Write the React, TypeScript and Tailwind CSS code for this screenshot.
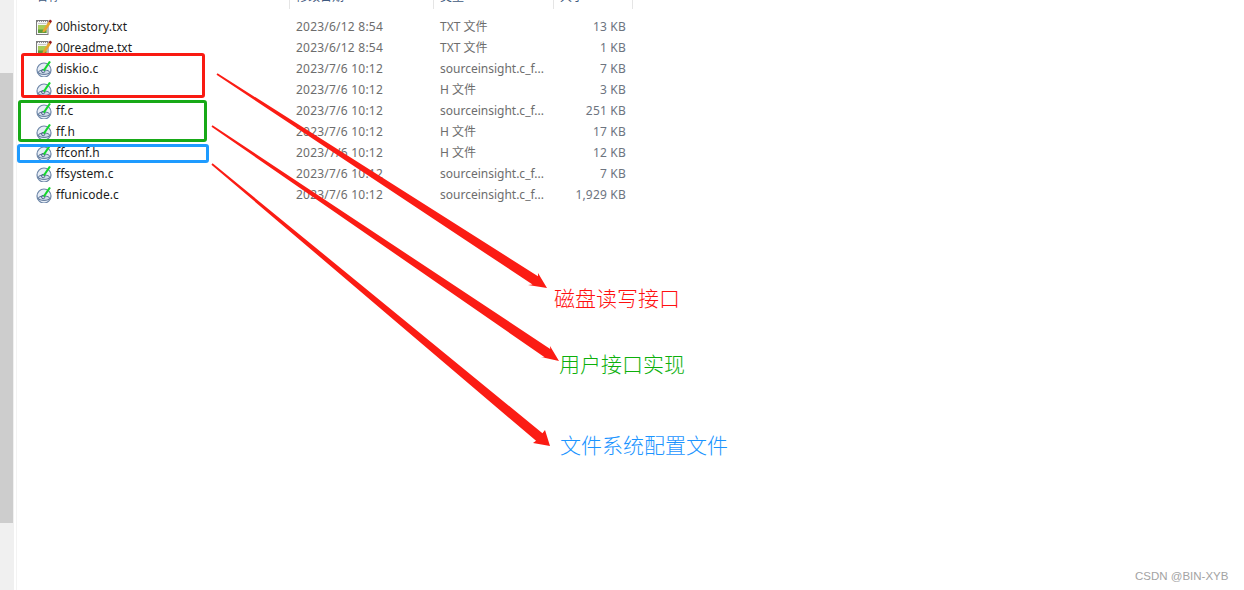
const FONT = "font-['Noto_Sans','Noto_Sans_CJK_SC',sans-serif]";

const files = [
  { name: "00history.txt", date: "2023/6/12 8:54", type: "TXT 文件", size: "13 KB", kind: "txt" },
  { name: "00readme.txt", date: "2023/6/12 8:54", type: "TXT 文件", size: "1 KB", kind: "txt" },
  { name: "diskio.c", date: "2023/7/6 10:12", type: "sourceinsight.c_f...", size: "7 KB", kind: "si" },
  { name: "diskio.h", date: "2023/7/6 10:12", type: "H 文件", size: "3 KB", kind: "si" },
  { name: "ff.c", date: "2023/7/6 10:12", type: "sourceinsight.c_f...", size: "251 KB", kind: "si" },
  { name: "ff.h", date: "2023/7/6 10:12", type: "H 文件", size: "17 KB", kind: "si" },
  { name: "ffconf.h", date: "2023/7/6 10:12", type: "H 文件", size: "12 KB", kind: "si" },
  { name: "ffsystem.c", date: "2023/7/6 10:12", type: "sourceinsight.c_f...", size: "7 KB", kind: "si" },
  { name: "ffunicode.c", date: "2023/7/6 10:12", type: "sourceinsight.c_f...", size: "1,929 KB", kind: "si" },
];

function TxtIcon() {
  return (
    <svg width="16" height="16" viewBox="0 0 16 16" className="shrink-0">
      <rect x="0.5" y="1.5" width="11.5" height="14" fill="#f6f6f6" stroke="#7a7a7a" />
      <path d="M1 2.5h11" stroke="#8f8f8f" strokeDasharray="1 1" />
      <path d="M2 4.5h8.5" stroke="#c9c9c9" />
      <rect x="2" y="6" width="8.5" height="8" fill="#a6cc5c" />
      <rect x="2" y="10.5" width="8.5" height="3.5" fill="#5f9c3c" />
      <path d="M7 11 L12.6 2.6 L14.8 4.2 L9.2 12.4 L6.4 13.4 Z" fill="#e9a52f" />
      <path d="M12.6 2.6 L14 0.6 L16 2 L14.8 4.2 Z" fill="#98161a" />
    </svg>
  );
}

function SiIcon() {
  return (
    <svg width="16" height="16" viewBox="0 0 16 16" className="shrink-0">
      <circle cx="8" cy="9" r="7" fill="#e6edf6" stroke="#6d86a8" strokeWidth="1.2" />
      <ellipse cx="8" cy="11.2" rx="5.6" ry="2.2" fill="#cfdbe9" stroke="#5d7596" strokeWidth="1" />
      <circle cx="7.2" cy="10" r="1.7" fill="none" stroke="#4a6387" strokeWidth="0.9" />
      <path d="M7.8 9.5 L14 0.5" stroke="#14d62c" strokeWidth="2.1" />
    </svg>
  );
}

function Row({ f }: { f: (typeof files)[number] }) {
  return (
    <div className="flex h-[21px] items-center text-[12px]">
      <div className="flex w-[272px] items-center gap-[4px] pl-[19px] text-[#1c1c1c]">
        {f.kind === "txt" ? <TxtIcon /> : <SiIcon />}
        <span className="tracking-[0.05px]">{f.name}</span>
      </div>
      <div className="w-[144px] pl-[7px] tracking-[0.22px] text-[#6d6d6d]">{f.date}</div>
      <div className="w-[120px] pl-[7px] whitespace-nowrap text-[#6d6d6d]">{f.type}</div>
      <div className="w-[73px] text-right tracking-[0.2px] text-[#6d7480]">{f.size}</div>
    </div>
  );
}

function Arrow({ x1, y1, x2, y2, b1, b2, color = "#fb1c14" }: { x1: number; y1: number; x2: number; y2: number; b1: number[]; b2: number[]; color?: string }) {
  const dx = x2 - x1;
  const dy = y2 - y1;
  const len = Math.hypot(dx, dy);
  const ux = dx / len;
  const uy = dy / len;
  const nx = -uy;
  const ny = ux;
  const back = len - 14;
  const bx = x1 + ux * back;
  const by = y1 + uy * back;
  const w = 5;
  const t = 0.9;
  const pts = [
    [x1 - nx * t, y1 - ny * t],
    [bx - nx * w, by - ny * w],
    b1,
    [x2, y2],
    b2,
    [bx + nx * w, by + ny * w],
    [x1 + nx * t, y1 + ny * t],
  ];
  return <polygon points={pts.map((p) => p.join(",")).join(" ")} fill={color} />;
}

export default function App() {
  return (
    <div className={`relative flex h-[590px] w-[1244px] overflow-hidden bg-white ${FONT}`}>
      <div className="flex w-[14px] flex-col bg-[#f0f0f0]">
        <div className="h-[73px]" />
        <div className="h-[450px] w-[13px] bg-[#cdcdcd]" />
      </div>
      <div className="ml-[2px] w-px bg-[#f3f3f3]" />
      <div className="flex flex-col">
        <div className="flex h-[9px] overflow-hidden text-[12px] leading-[16px] text-[#3f5a80]">
          <div className="w-[272px] pl-[19px]"><div className="-mt-[11px]">名称</div></div>
          <div className="w-[144px] border-l border-[#e5e5e5] pl-[6px]"><div className="-mt-[11px]">修改日期</div></div>
          <div className="w-[120px] border-l border-[#e5e5e5] pl-[6px]"><div className="-mt-[11px]">类型</div></div>
          <div className="w-[80px] border-x border-[#e5e5e5] pl-[6px]"><div className="-mt-[11px]">大小</div></div>
        </div>
        <div className="mt-[7px] flex flex-col">
          {files.map((f) => (
            <Row key={f.name} f={f} />
          ))}
        </div>
      </div>

      <div className="absolute left-[21px] top-[53px] h-[45px] w-[184px] rounded-[3px] border-[3px] border-[#f91a12]" />
      <div className="absolute left-[18px] top-[100px] h-[42px] w-[189px] rounded-[3px] border-[3px] border-[#17a917]" />
      <div className="absolute left-[17px] top-[144px] h-[19px] w-[192px] rounded-[3px] border-[3px] border-[#1e9bff]" />

      <svg className="absolute left-0 top-0" width="1244" height="590">
        <Arrow x1={217} y1={74} x2={547} y2={288} b1={[538, 273]} b2={[528, 285]} />
        <Arrow x1={212} y1={126} x2={559} y2={361} b1={[550, 346]} b2={[541, 357]} />
        <Arrow x1={212} y1={164} x2={550} y2={446} b1={[545, 430]} b2={[533, 443]} />
      </svg>

      <div className="absolute left-[554px] top-[283px] text-[21px] leading-[30px] font-light text-[#ff1010]">磁盘读写接口</div>
      <div className="absolute left-[559px] top-[349px] text-[21px] leading-[30px] font-light text-[#0cb00c]">用户接口实现</div>
      <div className="absolute left-[560px] top-[430px] text-[21px] leading-[30px] font-light text-[#1a94ff]">文件系统配置文件</div>
      <div className="absolute left-[1135px] top-[568px] font-['Liberation_Sans',sans-serif] text-[11.5px] leading-[16px] text-[#a3a3a3]">CSDN @BIN-XYB</div>
    </div>
  );
}
